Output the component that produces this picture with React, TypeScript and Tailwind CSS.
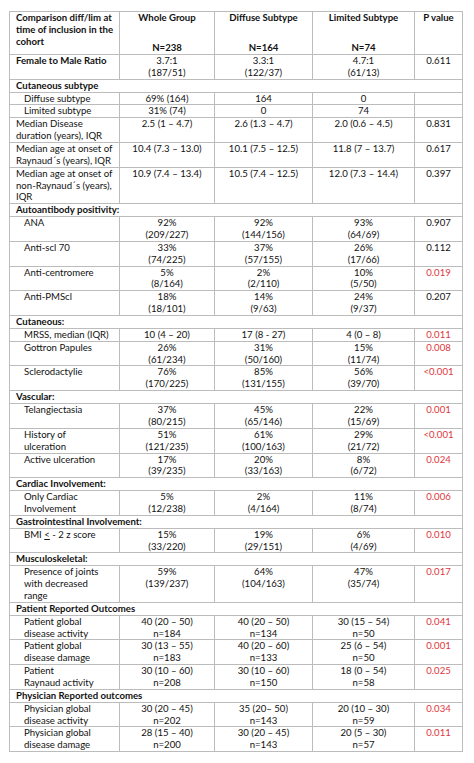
import React from 'react';

type DataRow = {
  kind: 'data';
  label: string[];
  indent?: boolean;
  bold?: boolean;
  whole: string[];
  diffuse: string[];
  limited: string[];
  p?: string;
  red?: boolean;
};
type SectionRow = { kind: 'section'; label: string };
type Row = DataRow | SectionRow;

const rows: Row[] = [
  { kind: 'data', label: ['Female to Male Ratio'], bold: true, whole: ['3.7:1', '(187/51)'], diffuse: ['3.3:1', '(122/37)'], limited: ['4.7:1', '(61/13)'], p: '0.611' },
  { kind: 'section', label: 'Cutaneous subtype' },
  { kind: 'data', label: ['Diffuse subtype'], indent: true, whole: ['69% (164)'], diffuse: ['164'], limited: ['0'] },
  { kind: 'data', label: ['Limited subtype'], indent: true, whole: ['31% (74)'], diffuse: ['0'], limited: ['74'] },
  { kind: 'data', label: ['Median Disease', 'duration (years), IQR'], whole: ['2.5 (1 – 4.7)'], diffuse: ['2.6 (1.3 – 4.7)'], limited: ['2.0 (0.6 – 4.5)'], p: '0.831' },
  { kind: 'data', label: ['Median age at onset of', 'Raynaud´s (years), IQR'], whole: ['10.4 (7.3 – 13.0)'], diffuse: ['10.1 (7.5 – 12.5)'], limited: ['11.8 (7 – 13.7)'], p: '0.617' },
  { kind: 'data', label: ['Median age at onset of', 'non-Raynaud´s (years),', 'IQR'], whole: ['10.9 (7.4 – 13.4)'], diffuse: ['10.5 (7.4 – 12.5)'], limited: ['12.0 (7.3 – 14.4)'], p: '0.397' },
  { kind: 'section', label: 'Autoantibody positivity:' },
  { kind: 'data', label: ['ANA'], indent: true, whole: ['92%', '(209/227)'], diffuse: ['92%', '(144/156)'], limited: ['93%', '(64/69)'], p: '0.907' },
  { kind: 'data', label: ['Anti-scl 70'], indent: true, whole: ['33%', '(74/225)'], diffuse: ['37%', '(57/155)'], limited: ['26%', '(17/66)'], p: '0.112' },
  { kind: 'data', label: ['Anti-centromere'], indent: true, whole: ['5%', '(8/164)'], diffuse: ['2%', '(2/110)'], limited: ['10%', '(5/50)'], p: '0.019', red: true },
  { kind: 'data', label: ['Anti-PMScl'], indent: true, whole: ['18%', '(18/101)'], diffuse: ['14%', '(9/63)'], limited: ['24%', '(9/37)'], p: '0.207' },
  { kind: 'section', label: 'Cutaneous:' },
  { kind: 'data', label: ['MRSS, median (IQR)'], indent: true, whole: ['10 (4 – 20)'], diffuse: ['17 (8 - 27)'], limited: ['4 (0 – 8)'], p: '0.011', red: true },
  { kind: 'data', label: ['Gottron Papules'], indent: true, whole: ['26%', '(61/234)'], diffuse: ['31%', '(50/160)'], limited: ['15%', '(11/74)'], p: '0.008', red: true },
  { kind: 'data', label: ['Sclerodactylie'], indent: true, whole: ['76%', '(170/225)'], diffuse: ['85%', '(131/155)'], limited: ['56%', '(39/70)'], p: '<0.001', red: true },
  { kind: 'section', label: 'Vascular:' },
  { kind: 'data', label: ['Telangiectasia'], indent: true, whole: ['37%', '(80/215)'], diffuse: ['45%', '(65/146)'], limited: ['22%', '(15/69)'], p: '0.001', red: true },
  { kind: 'data', label: ['History of', 'ulceration'], indent: true, whole: ['51%', '(121/235)'], diffuse: ['61%', '(100/163)'], limited: ['29%', '(21/72)'], p: '<0.001', red: true },
  { kind: 'data', label: ['Active ulceration'], indent: true, whole: ['17%', '(39/235)'], diffuse: ['20%', '(33/163)'], limited: ['8%', '(6/72)'], p: '0.024', red: true },
  { kind: 'section', label: 'Cardiac Involvement:' },
  { kind: 'data', label: ['Only Cardiac', 'Involvement'], indent: true, whole: ['5%', '(12/238)'], diffuse: ['2%', '(4/164)'], limited: ['11%', '(8/74)'], p: '0.006', red: true },
  { kind: 'section', label: 'Gastrointestinal Involvement:' },
  { kind: 'data', label: ['BMI ≤ - 2 z score'], indent: true, whole: ['15%', '(33/220)'], diffuse: ['19%', '(29/151)'], limited: ['6%', '(4/69)'], p: '0.010', red: true },
  { kind: 'section', label: 'Musculoskeletal:' },
  { kind: 'data', label: ['Presence of joints', 'with decreased', 'range'], indent: true, whole: ['59%', '(139/237)'], diffuse: ['64%', '(104/163)'], limited: ['47%', '(35/74)'], p: '0.017', red: true },
  { kind: 'section', label: 'Patient Reported Outcomes' },
  { kind: 'data', label: ['Patient global', 'disease activity'], indent: true, whole: ['40 (20 – 50)', 'n=184'], diffuse: ['40 (20 – 50)', 'n=134'], limited: ['30 (15 – 54)', 'n=50'], p: '0.041', red: true },
  { kind: 'data', label: ['Patient global', 'disease damage'], indent: true, whole: ['30 (13 – 55)', 'n=183'], diffuse: ['40 (20 – 60)', 'n=133'], limited: ['25 (6 – 54)', 'n=50'], p: '0.001', red: true },
  { kind: 'data', label: ['Patient', 'Raynaud activity'], indent: true, whole: ['30 (10 – 60)', 'n=208'], diffuse: ['30 (10 – 60)', 'n=150'], limited: ['18 (0 – 54)', 'n=58'], p: '0.025', red: true },
  { kind: 'section', label: 'Physician Reported outcomes' },
  { kind: 'data', label: ['Physician global', 'disease activity'], indent: true, whole: ['30 (20 – 45)', 'n=202'], diffuse: ['35 (20– 50)', 'n=143'], limited: ['20 (10 – 30)', 'n=59'], p: '0.034', red: true },
  { kind: 'data', label: ['Physician global', 'disease damage'], indent: true, whole: ['28 (15 – 40)', 'n=200'], diffuse: ['30 (20 – 45)', 'n=143'], limited: ['20 (5 – 30)', 'n=57'], p: '0.011', red: true },
];

const cell = 'border border-[#bcbcbc] p-0 align-top';

const Lines = ({ lines }: { lines: string[] }) => (
  <>
    {lines.map((l, i) => (
      <div key={i} className="whitespace-nowrap">
        {l === 'BMI ≤ - 2 z score' ? (
          <>
            BMI <span className="underline">&lt;</span> - 2 z score
          </>
        ) : (
          l
        )}
      </div>
    ))}
  </>
);

export default function App() {
  return (
    <div className="min-h-[763px] w-[474px] bg-white pt-[11px] pl-[9px] text-[#111111] font-['Lato','Open_Sans',sans-serif] text-[9.6px] leading-[11.86px]">
      <table className="w-[453px] table-fixed border-collapse">
        <colgroup>
          <col className="w-[110px]" />
          <col className="w-[95px]" />
          <col className="w-[98px]" />
          <col className="w-[102px]" />
          <col className="w-[48px]" />
        </colgroup>
        <thead>
          <tr className="h-[43px] font-bold">
            <th className={`${cell} pl-[6px] text-left font-bold`}>
              <Lines lines={['Comparison diff/lim at', 'time of inclusion in the', 'cohort']} />
            </th>
            {[
              ['Whole Group', 'N=238'],
              ['Diffuse Subtype', 'N=164'],
              ['Limited Subtype', 'N=74'],
            ].map(([a, b]) => (
              <th key={a} className={`${cell} font-bold`}>
                <div className="flex h-[42px] flex-col items-center justify-between">
                  <div>{a}</div>
                  <div>{b}</div>
                </div>
              </th>
            ))}
            <th className={`${cell} font-bold`}>P value</th>
          </tr>
        </thead>
        <tbody>
          {rows.map((r, i) =>
            r.kind === 'section' ? (
              <tr key={i}>
                <td colSpan={5} className={`${cell} pl-[6px] font-bold`}>
                  {r.label}
                </td>
              </tr>
            ) : (
              <tr key={i}>
                <td className={`${cell} ${r.indent ? 'pl-[14px]' : 'pl-[6px]'} ${r.bold ? 'font-bold' : ''}`}>
                  <Lines lines={r.label} />
                </td>
                <td className={`${cell} text-center`}>
                  <Lines lines={r.whole} />
                </td>
                <td className={`${cell} text-center`}>
                  <Lines lines={r.diffuse} />
                </td>
                <td className={`${cell} text-center`}>
                  <Lines lines={r.limited} />
                </td>
                <td className={`${cell} text-center ${r.red ? 'text-[#e0363b]' : ''}`}>{r.p}</td>
              </tr>
            ),
          )}
        </tbody>
      </table>
    </div>
  );
}
